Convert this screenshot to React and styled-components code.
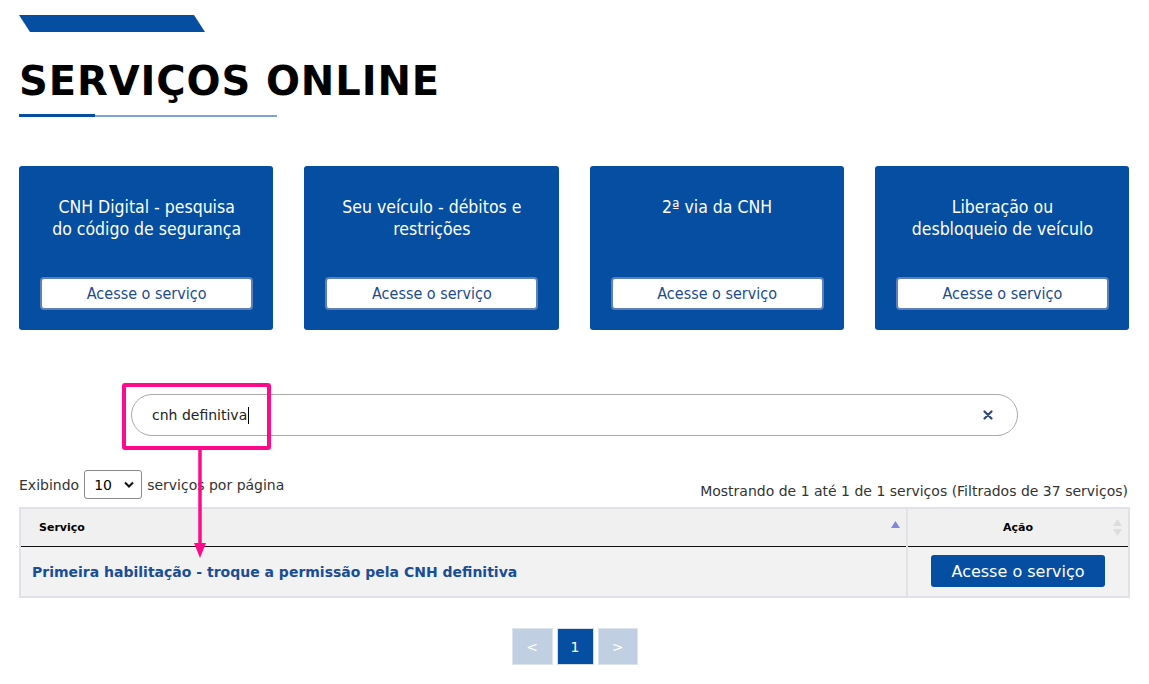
import React from "react";
import styled, { createGlobalStyle } from "styled-components";

const BLUE = "#054ea1";
const FONT = `"DejaVu Sans", Verdana, sans-serif`;
const CONDENSED = `"DejaVu Sans Condensed", "DejaVu Sans", Verdana, sans-serif`;

const Global = createGlobalStyle`
  html, body { margin: 0; padding: 0; background: #fff; }
  body { font-family: ${FONT}; color: #333; }
  * { box-sizing: border-box; }
`;

const Page = styled.main`
  position: relative;
  padding: 15px 19px 20px 19px;
  width: 1149px;
`;

const TopBar = styled.div`
  width: 186px;
  height: 17px;
  background: ${BLUE};
  clip-path: polygon(0 0, 175px 0, 186px 100%, 11px 100%);
`;

const Title = styled.h1`
  margin: 25px 0 0 0;
  font-family: ${FONT};
  font-weight: 700;
  font-size: 40px;
  line-height: 48px;
  color: #000;
  letter-spacing: 0.9px;
`;

const Underline = styled.div`
  display: flex;
  align-items: flex-end;
  margin-top: 9px;
  width: 258px;
  height: 3px;
`;

const UnderlineDark = styled.div`
  width: 76px;
  height: 3px;
  background: ${BLUE};
`;

const UnderlineLight = styled.div`
  flex: 1;
  height: 2px;
  background: #7da3d4;
`;

const Cards = styled.section`
  display: grid;
  grid-template-columns: repeat(4, 1fr);
  gap: 31px;
  margin-top: 49px;
  width: 1110px;
`;

const Card = styled.div`
  background: ${BLUE};
  border-radius: 3px;
  height: 164px;
  padding: 30px 20px 20px 21px;
  display: flex;
  flex-direction: column;
  align-items: center;
  font-family: ${CONDENSED};
`;

const CardTitle = styled.div`
  color: #fff;
  font-size: 17.5px;
  line-height: 22px;
  text-align: center;
`;

const CardButton = styled.button`
  margin-top: auto;
  width: 213px;
  height: 33px;
  background: #fff;
  border: 2px solid #5d80b8;
  border-radius: 4px;
  font-family: ${CONDENSED};
  font-size: 16px;
  color: #1c4b8e;
  cursor: pointer;
`;

const SearchRow = styled.div`
  margin: 64px auto 0 auto;
  width: 887px;
`;

const SearchField = styled.div`
  height: 42px;
  border: 1px solid #aaa;
  border-radius: 21px;
  display: flex;
  align-items: center;
  padding: 0 22px 0 20px;
  font-size: 14px;
  color: #222;
`;

const SearchText = styled.span`
  display: inline-flex;
  align-items: center;
`;

const Caret = styled.span`
  display: inline-block;
  width: 1px;
  height: 17px;
  background: #000;
  margin-left: 1px;
`;

const ClearBtn = styled.span`
  margin-left: auto;
  display: flex;
  align-items: center;
  justify-content: center;
  width: 14px;
  height: 14px;
`;

const Controls = styled.div`
  display: flex;
  justify-content: space-between;
  align-items: flex-end;
  margin-top: 34px;
  width: 1109px;
  font-size: 14px;
  color: #333;
`;

const Length = styled.label`
  display: flex;
  align-items: center;
  gap: 5px;
`;

const Select = styled.div`
  width: 58px;
  height: 29px;
  border: 1px solid #8a8a8a;
  border-radius: 3px;
  display: flex;
  align-items: center;
  padding: 0 7px 0 9px;
  color: #000;
  font-size: 14px;
  justify-content: space-between;
`;

const Info = styled.div`
  padding-bottom: 0px;
`;

const Table = styled.table`
  margin-top: 8px;
  width: 1111px;
  border-collapse: collapse;
  border: 2px solid #dfe2e6;
  font-family: ${FONT};
`;

const Th = styled.th`
  position: relative;
  height: 38px;
  background: #f0f0f0;
  border-bottom: 1px solid #111;
  border-right: ${(p) => (p.$divider ? "2px solid #dfe2e6" : "none")};
  font-size: 11px;
  font-weight: 700;
  color: #000;
  text-align: ${(p) => (p.$center ? "center" : "left")};
  padding: ${(p) => (p.$center ? "0" : "0 18px")};
  width: ${(p) => p.$w || "auto"};
`;

const SortIcon = styled.span`
  position: absolute;
  right: ${(p) => p.$right}px;
  top: ${(p) => p.$top}px;
  display: flex;
`;

const Td = styled.td`
  height: 51px;
  background: #f2f2f2;
  border-right: ${(p) => (p.$divider ? "2px solid #dfe2e6" : "none")};
  padding: ${(p) => (p.$center ? "0" : "0 11px")};
  text-align: ${(p) => (p.$center ? "center" : "left")};
`;

const RowLink = styled.a`
  color: #1a4d97;
  font-weight: 700;
  font-size: 14px;
  text-decoration: none;
`;

const RowButton = styled.button`
  width: 174px;
  height: 32px;
  background: ${BLUE};
  border: none;
  border-radius: 3px;
  color: #fff;
  font-family: ${FONT};
  font-size: 16px;
  vertical-align: middle;
`;

const Pager = styled.nav`
  display: flex;
  justify-content: center;
  gap: 4px;
  margin-top: 30px;
  width: 1111px;
`;

const PageBtn = styled.span`
  width: ${(p) => p.$w}px;
  height: 37px;
  display: flex;
  align-items: center;
  justify-content: center;
  background: ${(p) => (p.$active ? BLUE : "#c0cfe1")};
  border: 1px solid ${(p) => (p.$active ? "#d7dde6" : "#dde3ea")};
  color: #fff;
  font-size: 14px;
`;

const Highlight = styled.div`
  position: absolute;
  left: 122px;
  top: 383px;
  width: 149px;
  height: 67px;
  border: 4px solid #ff0a8a;
  border-radius: 3px;
  pointer-events: none;
`;

const Arrow = styled.svg`
  position: absolute;
  left: 192px;
  top: 449px;
  pointer-events: none;
`;

const services = [
  ["CNH Digital - pesquisa", "do código de segurança"],
  ["Seu veículo - débitos e", "restrições"],
  ["2ª via da CNH"],
  ["Liberação ou", "desbloqueio de veículo"],
];

export default function App() {
  return (
    <>
      <Global />
      <Page>
        <TopBar />
        <Title>SERVIÇOS ONLINE</Title>
        <Underline>
          <UnderlineDark />
          <UnderlineLight />
        </Underline>

        <Cards>
          {services.map((lines, i) => (
            <Card key={i}>
              <CardTitle>
                {lines.map((l, j) => (
                  <div key={j}>{l}</div>
                ))}
              </CardTitle>
              <CardButton>Acesse o serviço</CardButton>
            </Card>
          ))}
        </Cards>

        <SearchRow>
          <SearchField role="searchbox">
            <SearchText>
              cnh definitiva
              <Caret />
            </SearchText>
            <ClearBtn>
              <svg width="10" height="10" viewBox="0 0 10 10">
                <path d="M1.5 1.5 L8.5 8.5 M8.5 1.5 L1.5 8.5" stroke="#2d4a78" strokeWidth="2.2" strokeLinecap="round" />
              </svg>
            </ClearBtn>
          </SearchField>
        </SearchRow>

        <Controls>
          <Length>
            Exibindo
            <Select>
              <span>10</span>
              <svg width="10" height="7" viewBox="0 0 10 7">
                <path d="M1 1.5 L5 5.5 L9 1.5" stroke="#111" strokeWidth="2" fill="none" />
              </svg>
            </Select>
            serviços por página
          </Length>
          <Info>Mostrando de 1 até 1 de 1 serviços (Filtrados de 37 serviços)</Info>
        </Controls>

        <Table>
          <thead>
            <tr>
              <Th $divider>
                Serviço
                <SortIcon $right={6} $top={12}>
                  <svg width="9" height="7" viewBox="0 0 9 7">
                    <path d="M4.5 0 L9 7 L0 7 Z" fill="#8585dd" />
                  </svg>
                </SortIcon>
              </Th>
              <Th $center $w="222px">
                Ação
                <SortIcon $right={6} $top={10}>
                  <svg width="9" height="17" viewBox="0 0 9 17">
                    <path d="M4.5 0 L9 7 L0 7 Z" fill="#dcdcdc" />
                    <path d="M4.5 17 L9 10 L0 10 Z" fill="#dcdcdc" />
                  </svg>
                </SortIcon>
              </Th>
            </tr>
          </thead>
          <tbody>
            <tr>
              <Td $divider>
                <RowLink href="#">Primeira habilitação - troque a permissão pela CNH definitiva</RowLink>
              </Td>
              <Td $center>
                <RowButton>Acesse o serviço</RowButton>
              </Td>
            </tr>
          </tbody>
        </Table>

        <Pager>
          <PageBtn $w={41}>&lt;</PageBtn>
          <PageBtn $w={37} $active>1</PageBtn>
          <PageBtn $w={40}>&gt;</PageBtn>
        </Pager>

        <Highlight />
        <Arrow width="16" height="110" viewBox="0 0 16 110">
          <line x1="8" y1="0" x2="8" y2="96" stroke="#ff0a8a" strokeWidth="3.5" />
          <path d="M2 94 L14 94 L8 109 Z" fill="#ff0a8a" />
        </Arrow>
      </Page>
    </>
  );
}
